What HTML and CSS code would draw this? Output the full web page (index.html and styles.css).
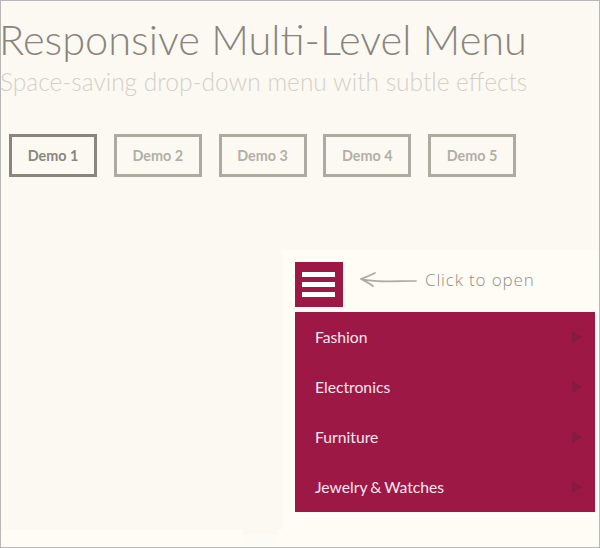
FILE: index.html
```html
<!DOCTYPE html>
<html lang="en">
<head>
<meta charset="utf-8">
<title>Responsive Multi-Level Menu</title>
<link rel="stylesheet" href="styles.css">
</head>
<body>
<div class="page">
  <header class="head">
    <h1 class="title">Responsive Multi-Level Menu</h1>
    <p class="subtitle">Space-saving drop-down menu with subtle effects</p>
  </header>
  <nav class="demos">
    <a class="demo current">Demo 1</a>
    <a class="demo">Demo 2</a>
    <a class="demo">Demo 3</a>
    <a class="demo">Demo 4</a>
    <a class="demo">Demo 5</a>
  </nav>
  <div class="lower">
    <div class="side">
      <div class="strip">
        <span class="strip-a"></span>
        <span class="strip-b"></span>
        <span class="strip-c"></span>
      </div>
    </div>
    <section class="panel">
      <div class="trigger-row">
        <button class="trigger" aria-label="Open menu"><span></span><span></span><span></span></button>
        <svg class="arrow" width="58" height="18" viewBox="0 0 58 18"><path d="M57 10C44 9.800 30 11 15 9.800C10 9.500 6 9 2 8M2 8C6 6.500 11 4.500 16 2M2 8C6 10 10 12 14 15" fill="none" stroke="#aeaaa2" stroke-width="1.700" stroke-linecap="round"/></svg>
        <span class="hint">Click to open</span>
      </div>
      <ul class="menu">
        <li class="item">Fashion<i class="chev"></i></li>
        <li class="item">Electronics<i class="chev"></i></li>
        <li class="item">Furniture<i class="chev"></i></li>
        <li class="item">Jewelry &amp; Watches<i class="chev"></i></li>
      </ul>
    </section>
  </div>
</div>
</body>
</html>
```
FILE: styles.css
```css
* { box-sizing: border-box; }
html, body { margin: 0; padding: 0; height: 100%; }
body { font-family: Lato, sans-serif; background: #fcf9f3; overflow: hidden; }
.page { width: 600px; height: 548px; border: 1px solid #b8b8b8; display: flex; flex-direction: column; overflow: hidden; }
.head { height: 133px; padding-top: 12px; margin-left: -2px; }
.title { margin: 0; font-weight: 300; font-size: 41.5px; line-height: 52px; color: #89857e; white-space: nowrap; }
.subtitle { margin: 2px 0 0 1px; font-weight: 300; font-size: 24.500px; line-height: 30px; color: #d4d0c8; white-space: nowrap; }
.demos { display: flex; gap: 16.75px; padding-left: 8px; height: 116px; }
.demo { width: 88px; height: 43px; border: 3px solid #aeaaa0; color: #b3afa6; font-weight: 700; font-size: 14.400px; line-height: 37px; text-align: center; }
.demo.current { border-color: #8a867e; color: #8a867e; }
.lower { flex: 1; display: flex; }
.side { width: 281px; display: flex; flex-direction: column; justify-content: flex-end; }
.strip { display: flex; height: 17px; }
.strip-a { width: 242px; background: #fffcf6; }
.strip-b { width: 35px; margin-top: 5px; background: #fdfbf5; }
.strip-c { width: 4px; background: #fffcf6; }
.panel { flex: 1; background: #fffcf6; padding: 12px 4px 0 13px; }
.trigger-row { display: flex; align-items: flex-start; height: 45px; }
.trigger { width: 48px; height: 45px; padding: 10px 8px 10px 7px; border: 0; background: #9e1846; display: flex; flex-direction: column; gap: 5px; }
.trigger span { display: block; width: 33px; height: 5px; background: #fff; }
.arrow { margin: 9px 0 0 16px; }
.hint { margin-left: 8px; font-family: "Open Sans", sans-serif; font-weight: 300; font-size: 17px; letter-spacing: .85px; line-height: 36px; color: #908c85; }
.menu { list-style: none; margin: 5px 0 0; padding: 0; width: 300px; background: #9e1846; }
.item { height: 50px; padding: 0 13px 0 20px; display: flex; align-items: center; justify-content: space-between; color: #f8e8ee; font-size: 15.700px; font-weight: 400; word-spacing: -1px; }
.chev { width: 0; height: 0; border-left: 10px solid #851a44; border-top: 6px solid transparent; border-bottom: 6px solid transparent; }
```
